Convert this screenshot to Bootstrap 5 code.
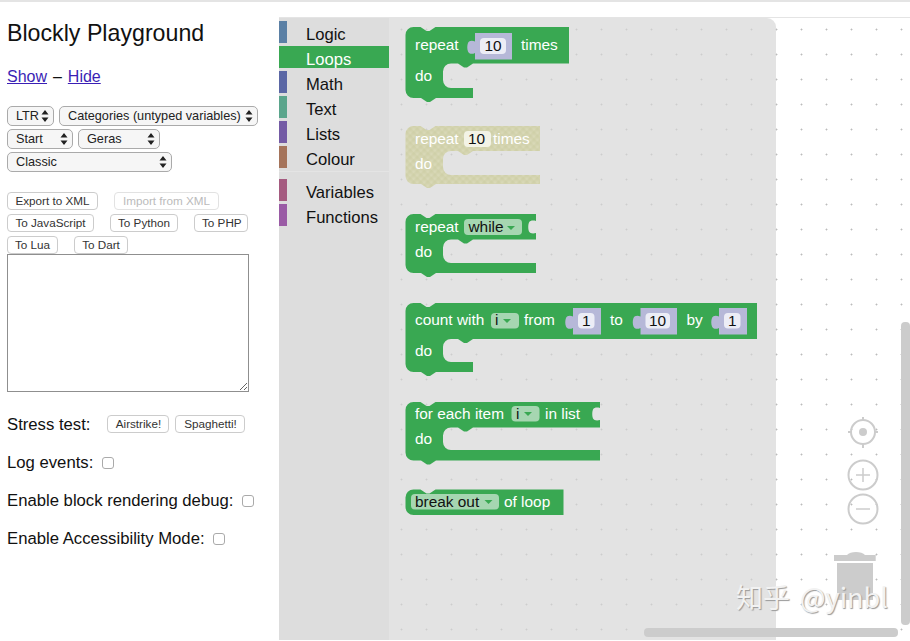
<!DOCTYPE html>
<html lang="en">
<head>
<meta charset="utf-8">
<title>Blockly Playground</title>
<link href="https://cdn.jsdelivr.net/npm/bootstrap@5.3.0/dist/css/bootstrap.min.css" rel="stylesheet">
<style>
html,body{margin:0;height:641px;overflow:hidden;background:#fff}
body{font-family:"Liberation Sans",Arial,sans-serif;color:#111;border-top:2px solid #e4e4e4}
.page-row{height:639px}
.side-col{width:279px;flex:none;padding:17px 0 0 7px;font-size:16px}
.side-title{font-size:23.2px;font-weight:400;line-height:28px;margin:0}
.side-links{margin:20px 0 0;line-height:20px;word-spacing:1.5px}
.side-links a{color:#3a1fb5}
.sel-row{gap:5px;margin-bottom:3px}
.sel-mini{display:block;height:20px;font-size:12.7px;line-height:18px;padding:0 14px 0 8px;border:1px solid #aaa;border-radius:5px;color:#222;background-color:#f6f6f6;background-repeat:no-repeat;background-position:right 4px center;background-size:8px 12px;background-image:url("data:image/svg+xml,%3Csvg xmlns='http://www.w3.org/2000/svg' viewBox='0 0 8 12'%3E%3Cpath fill='%23222' d='M4 0l3.5 4.5h-7zM4 12L.5 7.5h7z'/%3E%3C/svg%3E");appearance:none;-webkit-appearance:none;outline:0}
.sel-a{width:47px}.sel-b{width:199px}.sel-c{width:66px}.sel-d{width:82px}.sel-e{width:165px}
.sel-block{margin-top:19px}
.btn-block{margin-top:20px}
.btn-row{gap:16px;margin-bottom:4px}
.btn-row:last-child{margin-bottom:0}
.btn-mini{height:18px;padding:0 7px;font-size:11.7px;line-height:16px;color:#333;background:#fff;border:1px solid #ccc;border-radius:4px;white-space:nowrap}
.btn-mini:disabled{color:#bbb;background:#fff;border-color:#e2e2e2;opacity:1}
.w-xml{width:91px}.w-imp{width:105px}.w-js{width:87px}.w-py{width:68px}.w-php{width:54px}.w-lua{width:51px}.w-dart{width:54px}
.code-box{display:block;width:242px;height:138px;border:1px solid #8f8f8f;border-radius:0;background:#fff;padding:2px;resize:both;outline:0}
.opt-row{height:20px;margin-top:18px;line-height:20px;font-size:16.7px}
.opt-row > span:first-child{padding-top:2px}
.opt-first{margin-top:23px;height:18px}
.opt-first + .opt-row{margin-top:19px}
.stress-btns{gap:6px;margin-left:17px}
.w-air{width:62px}.w-spa{width:70px}
.tick{width:12px;height:12px;margin:1px 0 0 8.500px;border:1px solid #aaa;border-radius:3px;background:#fff;appearance:none;-webkit-appearance:none;flex:none}
.ws-area{flex:1 1 auto;margin-top:15px;height:623px;border-top:1px solid #e4e4e4;position:relative;overflow:hidden;background-color:#fff;background-position:10.2px -1.2px;background-size:25px 25px;background-image:url("data:image/svg+xml,%3Csvg xmlns='http://www.w3.org/2000/svg' width='25' height='25'%3E%3Cpath fill='%23e2e2e2' d='M11 12h3v1h-3zM12 11h1v3h-1z'/%3E%3Cpath fill='%23bbb' d='M12 12h1v1h-1z'/%3E%3C/svg%3E")}
.tool-col{width:110px;flex:none;background:#ddd;padding-top:3px;font-size:16.6px}
.tool-item{height:22px;margin-bottom:3px;line-height:28px;padding-left:27px;color:#111;position:relative}
.tool-item::before{content:"";position:absolute;left:0;top:0;bottom:0;width:8px;background:var(--cat)}
.tool-on{background:#39a852;color:#fff}
.tool-sep{height:1px;background:#e4e4e4;margin:1px 0 7px}
.fly-col{width:387px;flex:none;background:rgba(214,214,214,.68);border-top-right-radius:9px}
.fly-col svg{display:block;margin-top:-1px}
.blk-t{font-family:"Liberation Sans",Arial,sans-serif;font-size:15.4px;fill:#fff}
.blk-d{fill:#111}
.scroll-v{position:absolute;left:622px;top:304px;width:9px;height:303px;background:#ccc;border-radius:4px}
.scroll-h{position:absolute;left:365px;top:610px;width:254px;height:9px;background:#ccc;border-radius:4px}
.ws-tools{position:absolute;left:555px;top:399px}
.water{position:absolute;left:457px;top:562px;font-family:"Noto Sans CJK SC","Liberation Sans",sans-serif;font-size:27px;line-height:34px;word-spacing:4px;color:#f2f2f2;text-shadow:1px 1px 1px #999;white-space:nowrap}
</style>
</head>
<body>
<div class="page-row d-flex">
  <div class="side-col">
    <h1 class="side-title">Blockly Playground</h1>
    <p class="side-links"><a href="#">Show</a> &ndash; <a href="#">Hide</a></p>
    <div class="sel-block">
      <div class="sel-row d-flex">
        <select class="sel-mini sel-a"><option>LTR</option></select>
        <select class="sel-mini sel-b"><option>Categories (untyped variables)</option></select>
      </div>
      <div class="sel-row d-flex">
        <select class="sel-mini sel-c"><option>Start</option></select>
        <select class="sel-mini sel-d"><option>Geras</option></select>
      </div>
      <div class="sel-row d-flex">
        <select class="sel-mini sel-e"><option>Classic</option></select>
      </div>
    </div>
    <div class="btn-block">
      <div class="btn-row d-flex">
        <button type="button" class="btn btn-mini w-xml">Export to XML</button>
        <button type="button" class="btn btn-mini w-imp" disabled>Import from XML</button>
      </div>
      <div class="btn-row d-flex">
        <button type="button" class="btn btn-mini w-js">To JavaScript</button>
        <button type="button" class="btn btn-mini w-py">To Python</button>
        <button type="button" class="btn btn-mini w-php">To PHP</button>
      </div>
      <div class="btn-row d-flex">
        <button type="button" class="btn btn-mini w-lua">To Lua</button>
        <button type="button" class="btn btn-mini w-dart">To Dart</button>
      </div>
    </div>
    <textarea class="code-box"></textarea>
    <div class="opt-row opt-first d-flex align-items-center">
      <span>Stress test:</span>
      <span class="stress-btns d-flex">
        <button type="button" class="btn btn-mini w-air">Airstrike!</button>
        <button type="button" class="btn btn-mini w-spa">Spaghetti!</button>
      </span>
    </div>
    <div class="opt-row d-flex align-items-center"><span>Log events:</span><input class="tick" type="checkbox" aria-label="Log events"></div>
    <div class="opt-row d-flex align-items-center"><span>Enable block rendering debug:</span><input class="tick" type="checkbox" aria-label="Enable block rendering debug"></div>
    <div class="opt-row d-flex align-items-center"><span>Enable Accessibility Mode:</span><input class="tick" type="checkbox" aria-label="Enable Accessibility Mode"></div>
  </div>

  <div class="ws-area d-flex">
    <div class="tool-col">
      <div class="tool-item" style="--cat:#5b80a5">Logic</div>
      <div class="tool-item tool-on" style="--cat:#39a852">Loops</div>
      <div class="tool-item" style="--cat:#5b67a5">Math</div>
      <div class="tool-item" style="--cat:#5ba58c">Text</div>
      <div class="tool-item" style="--cat:#745ba5">Lists</div>
      <div class="tool-item" style="--cat:#a5745b">Colour</div>
      <div class="tool-sep"></div>
      <div class="tool-item" style="--cat:#a55b80">Variables</div>
      <div class="tool-item" style="--cat:#9a5ba5">Functions</div>
    </div>
    <div class="fly-col">
      <svg width="387" height="624" viewBox="389 17 387 624" xmlns="http://www.w3.org/2000/svg">
        <defs>
          <pattern id="hatch" width="5" height="5" patternUnits="userSpaceOnUse" patternTransform="rotate(45)">
            <rect width="5" height="5" fill="#d3d3ae"/>
            <rect width="2.500" height="2.500" fill="#cfd0a8"/>
            <rect x="2.500" y="2.500" width="2.500" height="2.500" fill="#d8d8b6"/>
          </pattern>
        </defs>

        <!-- repeat 10 times -->
        <path fill="#39a852" d="M405.500 35a8 8 0 0 1 8-8h7l6 4h3l6-4H569V63.500H473l-6 4h-3l-6-4h-7a8 8 0 0 0-8 8V80a8 8 0 0 0 8 8H473V98H436l-6 4h-3l-6-4h-7.500a8 8 0 0 1-8-8z"/>
        <text class="blk-t" x="415" y="50">repeat</text>
        <text class="blk-t" x="415" y="81">do</text>
        <text class="blk-t" x="521" y="50">times</text>
        <path fill="#b6b8d8" d="M475 33H512V59.500H475V53c-3 1.500-6 1-7-1.500s-1-6 0-8.500 4-3 7-1.500z"/>
        <rect x="480" y="38" width="26" height="16" rx="4" fill="#ecedf6"/>
        <text class="blk-t blk-d" x="484.500" y="51">10</text>

        <!-- insertion preview -->
        <path fill="url(#hatch)" d="M405.500 134a8 8 0 0 1 8-8h7l6 4h3l6-4H540V151H473l-6 4h-3l-6-4h-7a8 8 0 0 0-8 8V167a8 8 0 0 0 8 8H540V184H436l-6 4h-3l-6-4h-7.500a8 8 0 0 1-8-8z"/>
        <text class="blk-t" x="415" y="144">repeat</text>
        <text class="blk-t" x="415" y="169">do</text>
        <text class="blk-t" x="493" y="144">times</text>
        <rect x="464" y="131" width="27" height="16" rx="4" fill="#f3f3e6"/>
        <text class="blk-t blk-d" x="468" y="144">10</text>

        <!-- repeat while -->
        <path fill="#39a852" d="M405.500 222a8 8 0 0 1 8-8h7l6 4h3l6-4H536V221c-3-1-6-.5-7 1.500s-1 7 0 9 4 2.500 7 1.500V239.500H473l-6 4h-3l-6-4h-7a8 8 0 0 0-8 8V255a8 8 0 0 0 8 8H536V273H436l-6 4h-3l-6-4h-7.500a8 8 0 0 1-8-8z"/>
        <text class="blk-t" x="415" y="232">repeat</text>
        <text class="blk-t" x="415" y="257">do</text>
        <rect x="464" y="219" width="58" height="16" rx="4" fill="#a6d6b1"/>
        <text class="blk-t blk-d" x="468.500" y="232">while</text>
        <path fill="#39a852" d="M507 226h8l-4 4z"/>

        <!-- count with -->
        <path fill="#39a852" d="M405.500 311a8 8 0 0 1 8-8h7l6 4h3l6-4H757V339H473l-6 4h-3l-6-4h-7a8 8 0 0 0-8 8V354a8 8 0 0 0 8 8H473V372H436l-6 4h-3l-6-4h-7.500a8 8 0 0 1-8-8z"/>
        <text class="blk-t" x="415" y="325">count with</text>
        <text class="blk-t" x="524" y="325">from</text>
        <text class="blk-t" x="610" y="325">to</text>
        <text class="blk-t" x="686.500" y="325">by</text>
        <text class="blk-t" x="415" y="356">do</text>
        <rect x="491" y="313" width="28" height="15.500" rx="4" fill="#a6d6b1"/>
        <text class="blk-t blk-d" x="495" y="325">i</text>
        <path fill="#39a852" d="M503 319h8l-4 4z"/>
        <path fill="#b6b8d8" d="M573 308H601V334.500H573V328c-3 1.500-6 1-7-1.500s-1-6 0-8.500 4-3 7-1.500z"/>
        <rect x="578" y="313" width="16.500" height="15.500" rx="4" fill="#ecedf6"/>
        <text class="blk-t blk-d" x="582" y="326">1</text>
        <path fill="#b6b8d8" d="M640.500 308H677V334.500H640.500V328c-3 1.500-6 1-7-1.500s-1-6 0-8.500 4-3 7-1.500z"/>
        <rect x="645.500" y="313" width="24.500" height="15.500" rx="4" fill="#ecedf6"/>
        <text class="blk-t blk-d" x="649" y="326">10</text>
        <path fill="#b6b8d8" d="M719 308H747V334.500H719V328c-3 1.500-6 1-7-1.500s-1-6 0-8.500 4-3 7-1.500z"/>
        <rect x="724" y="313" width="16.500" height="15.500" rx="4" fill="#ecedf6"/>
        <text class="blk-t blk-d" x="728" y="326">1</text>

        <!-- for each -->
        <path fill="#39a852" d="M405.500 410a8 8 0 0 1 8-8h7l6 4h3l6-4H600V408c-3-1-6-.5-7 1.500s-1 7 0 9 4 2.500 7 1.500V427.500H473l-6 4h-3l-6-4h-7a8 8 0 0 0-8 8V442a8 8 0 0 0 8 8H600V460.500H436l-6 4h-3l-6-4h-7.500a8 8 0 0 1-8-8z"/>
        <text class="blk-t" x="415" y="419">for each item</text>
        <text class="blk-t" x="545" y="419">in list</text>
        <text class="blk-t" x="415" y="444">do</text>
        <rect x="511.500" y="406" width="28" height="15.500" rx="4" fill="#a6d6b1"/>
        <text class="blk-t blk-d" x="516" y="419">i</text>
        <path fill="#39a852" d="M524 412h8l-4 4z"/>

        <!-- break out -->
        <path fill="#39a852" d="M405.500 497.500a8 8 0 0 1 8-8h7l6 4h3l6-4H563.500V515H413.500a8 8 0 0 1-8-8z"/>
        <rect x="411" y="494" width="88" height="15.500" rx="4" fill="#a6d6b1"/>
        <text class="blk-t blk-d" x="415" y="507">break out</text>
        <path fill="#39a852" d="M484.500 500h8l-4 4z"/>
        <text class="blk-t" x="504" y="507">of loop</text>
      </svg>
    </div>

    <svg class="ws-tools" width="76" height="205" viewBox="555 417 76 205" xmlns="http://www.w3.org/2000/svg" aria-hidden="true">
      <g fill="none" stroke="#ccc">
        <circle cx="584" cy="432" r="12" stroke-width="2"/>
        <path stroke-width="2" d="M584 417v4M584 443v5M569 432h4M595 432h4"/>
        <circle cx="584" cy="475" r="14.500" stroke-width="2"/>
        <path stroke-width="1.500" d="M577 475h14M584 468v14"/>
        <circle cx="584" cy="509" r="14.500" stroke-width="2"/>
        <path stroke-width="1.500" d="M577 509h14"/>
      </g>
      <circle cx="584" cy="432" r="4" fill="#ccc"/>
      <path fill="#ccc" d="M555 555h13c3-4 15-4 18 0h10.700v6H555zM558 563h36v37h-36z"/>
    </svg>
    <div class="scroll-v"></div>
    <div class="scroll-h"></div>
    <div class="water">知乎 @yinbl</div>
  </div>
</div>
</body>
</html>
